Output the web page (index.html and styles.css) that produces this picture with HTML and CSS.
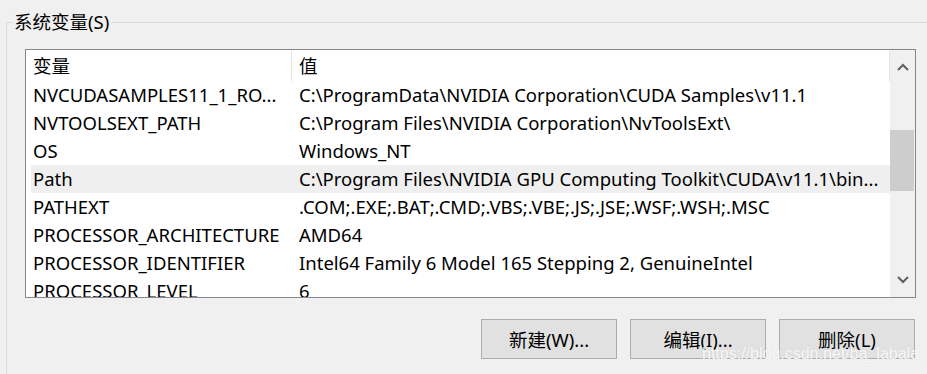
FILE: index.html
```html
<!DOCTYPE html>
<html lang="zh-CN">
  <head>
    <meta charset="UTF-8" />
    <title>系统变量</title>
    <link rel="stylesheet" href="styles.css">
  </head>
  <body>
    <fieldset class="group">
      <legend>系统变量(S)</legend>

      <div class="listbox">
        <div class="list">
          <div class="list-header">
            <div class="col col-name">变量</div>
            <div class="col col-value">值</div>
          </div>
          <div class="row"><span>NVCUDASAMPLES11_1_RO...</span><span>C:\ProgramData\NVIDIA Corporation\CUDA Samples\v11.1</span></div>
          <div class="row"><span>NVTOOLSEXT_PATH</span><span>C:\Program Files\NVIDIA Corporation\NvToolsExt\</span></div>
          <div class="row"><span>OS</span><span>Windows_NT</span></div>
          <div class="row selected"><span>Path</span><span>C:\Program Files\NVIDIA GPU Computing Toolkit\CUDA\v11.1\bin...</span></div>
          <div class="row"><span>PATHEXT</span><span>.COM;.EXE;.BAT;.CMD;.VBS;.VBE;.JS;.JSE;.WSF;.WSH;.MSC</span></div>
          <div class="row"><span>PROCESSOR_ARCHITECTURE</span><span>AMD64</span></div>
          <div class="row"><span>PROCESSOR_IDENTIFIER</span><span>Intel64 Family 6 Model 165 Stepping 2, GenuineIntel</span></div>
          <div class="row"><span>PROCESSOR_LEVEL</span><span>6</span></div>
        </div>

        <div class="scrollbar">
          <div class="arrow">
            <svg width="12" height="8" viewBox="0 0 12 8"><path d="M1 7 L6 2 L11 7" fill="none" stroke="#606060" stroke-width="2"/></svg>
          </div>
          <div class="track">
            <div class="thumb"></div>
          </div>
          <div class="arrow">
            <svg width="12" height="8" viewBox="0 0 12 8"><path d="M1 1 L6 6 L11 1" fill="none" stroke="#606060" stroke-width="2"/></svg>
          </div>
        </div>
      </div>

      <div class="buttons">
        <button>新建(W)...</button>
        <button>编辑(I)...</button>
        <button>删除(L)</button>
      </div>
    </fieldset>

    <div class="watermark">https://blog.csdn.net/ba_labala</div>
  </body>
</html>
```

FILE: styles.css
```css
* {
  margin: 0;
  padding: 0;
  box-sizing: border-box;
}

body {
  background: #f0f0f0;
  font-family: "Noto Sans", "Noto Sans CJK SC", sans-serif;
  font-size: 18.5px;
  color: #000;
  width: 927px;
  height: 374px;
  overflow: hidden;
  position: relative;
}

.group {
  margin: 11px 0 0 6px;
  width: 960px;
  height: 380px;
  border: 1px solid #dcdcdc;
  padding: 16px 0 0 18px;
}

.group legend {
  margin-left: -13px;
  padding: 0 2px;
  line-height: 22px;
  font-size: 18.5px;
}

.listbox {
  width: 891px;
  height: 249px;
  border: 1px solid #828790;
  background: #fff;
  display: flex;
  overflow: hidden;
}

.list {
  flex: 1;
  padding-left: 5px;
  overflow: hidden;
}

.list-header {
  display: flex;
  height: 31px;
  align-items: center;
}

.col {
  height: 30px;
  line-height: 30px;
}

.col-name {
  width: 261px;
  padding-left: 2px;
  border-right: 1px solid #e5e5e5;
}

.col-value {
  flex: 1;
  padding-left: 7px;
  border-right: 1px solid #e5e5e5;
}

.row {
  display: flex;
  height: 28px;
  line-height: 28px;
  padding-left: 2px;
  white-space: nowrap;
}

.row span:first-child {
  width: 266px;
  flex-shrink: 0;
}

.row.selected {
  background: #efefef;
}

.scrollbar {
  width: 25px;
  background: #f0f0f0;
  display: flex;
  flex-direction: column;
}

.arrow {
  height: 34px;
  display: flex;
  align-items: center;
  justify-content: center;
}

.track {
  flex: 1;
  padding-top: 46px;
}

.thumb {
  width: 24px;
  height: 61px;
  background: #cdcdcd;
}

.buttons {
  display: flex;
  justify-content: flex-end;
  gap: 13px;
  width: 890px;
  margin-top: 21px;
}

.buttons button {
  width: 136px;
  height: 40px;
  background: #e1e1e1;
  border: 1px solid #adadad;
  font-family: "Noto Sans", "Noto Sans CJK SC", sans-serif;
  font-size: 18.5px;
  color: #000;
}

.watermark {
  position: absolute;
  left: 702px;
  top: 345px;
  font-family: "Liberation Sans", sans-serif;
  font-size: 16px;
  color: rgba(255, 255, 255, 0.9);
  text-shadow: 0 0 1px rgba(0, 0, 0, 0.12);
}
```
